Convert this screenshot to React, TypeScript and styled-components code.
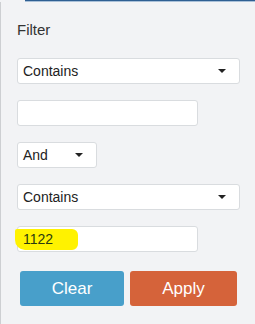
import React from "react";
import styled, { createGlobalStyle } from "styled-components";

const GlobalStyle = createGlobalStyle`
  html, body {
    margin: 0;
    padding: 0;
    background: #f2f3f5;
    font-family: "Liberation Sans", Arial, sans-serif;
  }
`;

const TopLine = styled.div`
  height: 1px;
  margin-left: 25px;
  background: #2f5f92;
  border-bottom: 1px solid #a9c0d8;
`;

const Panel = styled.div`
  border-left: 1px solid #cdcfd2;
  min-height: 322px;
  box-sizing: border-box;
  padding: 18px 0 0 16px;
  display: flex;
  flex-direction: column;
  align-items: flex-start;
`;

const Title = styled.div`
  font-size: 15px;
  color: #333;
  line-height: 20px;
  margin-bottom: 18px;
`;

const Field = styled.div<{ $width: number }>`
  position: relative;
  width: ${(p) => p.$width}px;
  height: 26px;
  box-sizing: border-box;
  background: #fff;
  border: 1px solid #d9dcdf;
  border-radius: 3px;
  margin-bottom: 16px;
  display: flex;
  align-items: center;
  padding: 0 5px;
  font-size: 14px;
  color: #222;
`;

const Caret = styled.span`
  margin-left: auto;
  margin-right: 8px;
  width: 0;
  height: 0;
  border-left: 4px solid transparent;
  border-right: 4px solid transparent;
  border-top: 4px solid #222;
`;

const Highlight = styled.span`
  position: absolute;
  left: -3px;
  top: 2px;
  width: 63px;
  height: 21px;
  background: #fff200;
  border-radius: 2px 6px 6px 10px;
`;

const Value = styled.span`
  position: relative;
  color: #2b3a10;
`;

const Buttons = styled.div`
  display: flex;
  gap: 6px;
  margin: 3px 0 0 3px;
`;

const Button = styled.button<{ $color: string; $width: number }>`
  width: ${(p) => p.$width}px;
  height: 35px;
  border: none;
  border-radius: 3px;
  background: ${(p) => p.$color};
  color: #fff;
  font-family: "Liberation Sans", Arial, sans-serif;
  font-size: 17px;
  cursor: pointer;
`;

export default function App() {
  return (
    <>
      <GlobalStyle />
      <TopLine />
      <Panel>
        <Title>Filter</Title>
        <Field $width={223}>
          Contains
          <Caret />
        </Field>
        <Field $width={181} />
        <Field $width={80}>
          And
          <Caret />
        </Field>
        <Field $width={223}>
          Contains
          <Caret />
        </Field>
        <Field $width={181}>
          <Highlight />
          <Value>1122</Value>
        </Field>
        <Buttons>
          <Button $color="#489fca" $width={104}>Clear</Button>
          <Button $color="#d5633a" $width={107}>Apply</Button>
        </Buttons>
      </Panel>
    </>
  );
}
